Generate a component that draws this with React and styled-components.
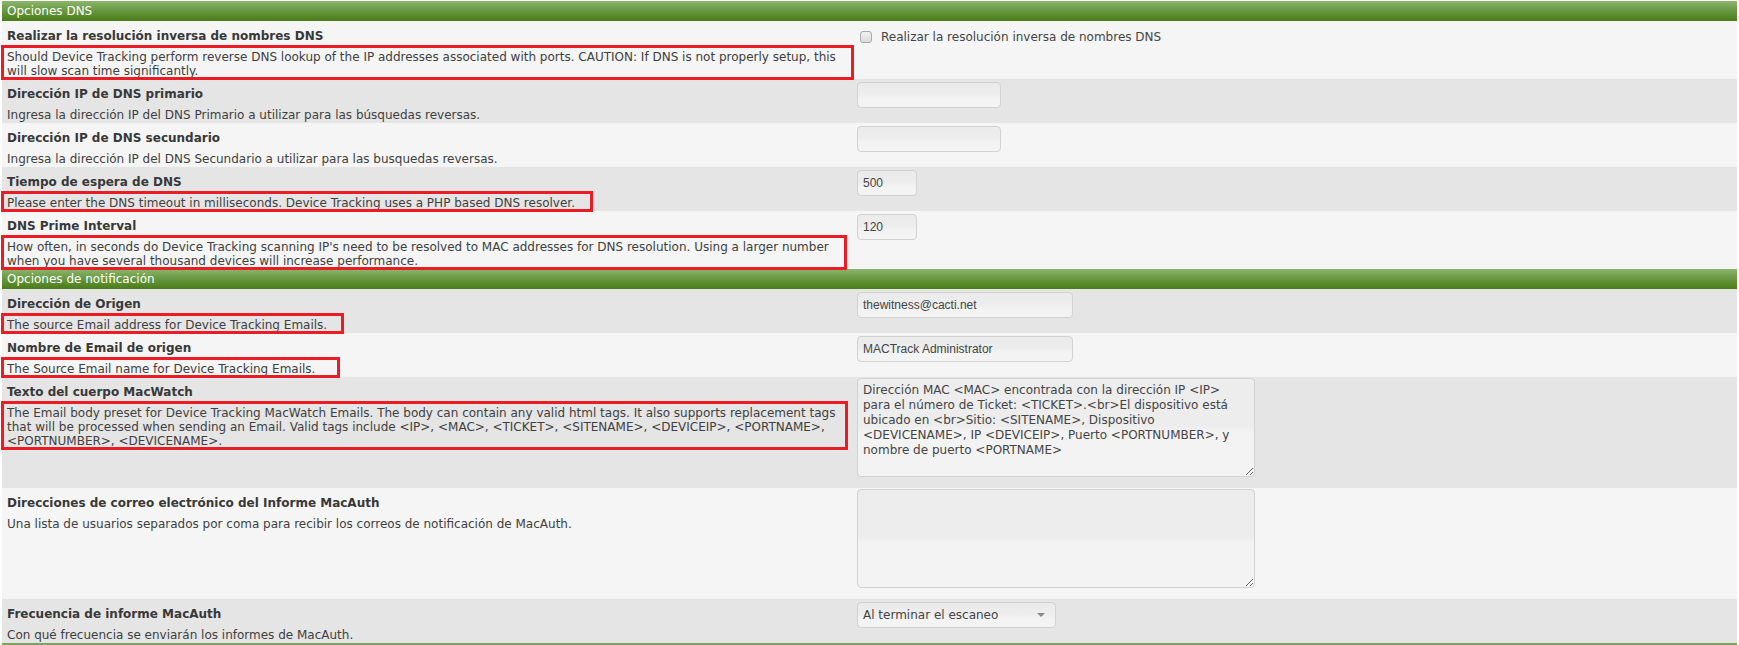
import styled, { createGlobalStyle } from 'styled-components'

const GlobalStyle = createGlobalStyle`
  body {
    margin: 0;
    background: #ffffff;
    font-family: 'DejaVu Sans', Verdana, sans-serif;
    font-size: 12px;
    color: #444;
  }
`

const Page = styled.div`
  padding: 1px 2px 0 2px;
`

const SectionHeader = styled.div`
  height: 20px;
  line-height: 20px;
  padding-left: 5px;
  color: #ffffff;
  font-size: 12px;
  background: linear-gradient(to bottom, #8bb66c 0%, #6a9a43 45%, #4a7c17 100%);
`

const Row = styled.div`
  display: grid;
  grid-template-columns: 854px 1fr;
  background: ${(p) => (p.$alt ? '#e5e5e5' : '#f5f5f5')};
`

const LabelCell = styled.div`
  padding: 6px 2px 1px 5px;
`

const FieldName = styled.div`
  font-size: 12px;
  font-weight: bold;
  color: #383838;
  line-height: 18px;
`

const Description = styled.div`
  position: relative;
  margin-top: 5px;
  font-size: 12px;
  line-height: 14px;
  color: #404040;

  ${(p) =>
    p.$mark &&
    `
    &::after {
      content: '';
      position: absolute;
      left: -6px;
      top: -5px;
      bottom: -2px;
      width: ${p.$mark}px;
      border: 3px solid #ec1c24;
      box-sizing: border-box;
      pointer-events: none;
    }
  `}
`

const FieldCell = styled.div`
  padding: 3px 0 0 1px;
`

const TextInput = styled.input`
  box-sizing: border-box;
  width: ${(p) => p.$w}px;
  height: 26px;
  padding: 0 5px;
  border: 1px solid #d2d2d2;
  border-radius: 4px;
  background: linear-gradient(to bottom, #ebebeb 0%, #ededed 45%, #f3f3f3 65%, #f3f3f3 100%);
  font-family: 'Liberation Sans', Arial, sans-serif;
  font-size: 12px;
  color: #444;
  outline: none;
`

const TextArea = styled.textarea`
  display: block;
  box-sizing: border-box;
  width: 398px;
  height: 99px;
  margin-top: -2px;
  margin-bottom: 11px;
  padding: 4px 5px;
  border: 1px solid #d2d2d2;
  border-radius: 4px;
  background: linear-gradient(to bottom, #ededed 0%, #ededed 48%, #f3f3f3 55%, #f3f3f3 100%);
  font-family: 'DejaVu Sans', Verdana, sans-serif;
  font-size: 12px;
  line-height: 15px;
  color: #444;
  outline: none;
`

const CheckLine = styled.label`
  display: flex;
  align-items: center;
  gap: 9px;
  padding: 6px 0 0 3px;
  color: #444;
`

const CheckBox = styled.span`
  width: 12px;
  height: 12px;
  box-sizing: border-box;
  border: 1px solid #a9a9a9;
  border-radius: 3px;
  background: linear-gradient(to bottom, #f0f0f0, #dcdcdc);
`

const SelectBox = styled.div`
  box-sizing: border-box;
  width: 199px;
  height: 26px;
  padding: 0 10px 0 5px;
  display: flex;
  align-items: center;
  justify-content: space-between;
  border: 1px solid #d2d2d2;
  border-radius: 4px;
  background: linear-gradient(to bottom, #ebebeb 0%, #ededed 45%, #f3f3f3 65%, #f3f3f3 100%);
  color: #444;
`

const Caret = styled.span`
  width: 0;
  height: 0;
  border-left: 4px solid transparent;
  border-right: 4px solid transparent;
  border-top: 4px solid #888;
`

const BottomLine = styled.div`
  height: 3px;
  background: #7aa45a;
`

const macwatchBody =
  'Dirección MAC <MAC> encontrada con la dirección IP <IP> para el número de Ticket: <TICKET>.<br>El dispositivo está ubicado en <br>Sitio: <SITENAME>, Dispositivo <DEVICENAME>, IP <DEVICEIP>, Puerto <PORTNUMBER>, y nombre de puerto <PORTNAME>'

const Field = ({ name, desc, mark, alt, children }) => (
  <Row $alt={alt}>
    <LabelCell>
      <FieldName>{name}</FieldName>
      <Description $mark={mark}>{desc}</Description>
    </LabelCell>
    <FieldCell>{children}</FieldCell>
  </Row>
)

const App = () => {
  return (
    <Page>
      <GlobalStyle />
      <SectionHeader>Opciones DNS</SectionHeader>
      <Field
        name="Realizar la resolución inversa de nombres DNS"
        desc="Should Device Tracking perform reverse DNS lookup of the IP addresses associated with ports. CAUTION: If DNS is not properly setup, this will slow scan time significantly."
        mark={853}
      >
        <CheckLine>
          <CheckBox />
          Realizar la resolución inversa de nombres DNS
        </CheckLine>
      </Field>
      <Field
        alt
        name="Dirección IP de DNS primario"
        desc="Ingresa la dirección IP del DNS Primario a utilizar para las búsquedas reversas."
      >
        <TextInput $w={144} readOnly />
      </Field>
      <Field
        name="Dirección IP de DNS secundario"
        desc="Ingresa la dirección IP del DNS Secundario a utilizar para las busquedas reversas."
      >
        <TextInput $w={144} readOnly />
      </Field>
      <Field
        alt
        name="Tiempo de espera de DNS"
        desc="Please enter the DNS timeout in milliseconds. Device Tracking uses a PHP based DNS resolver."
        mark={592}
      >
        <TextInput $w={60} defaultValue="500" readOnly />
      </Field>
      <Field
        name="DNS Prime Interval"
        desc="How often, in seconds do Device Tracking scanning IP's need to be resolved to MAC addresses for DNS resolution. Using a larger number when you have several thousand devices will increase performance."
        mark={846}
      >
        <TextInput $w={60} defaultValue="120" readOnly />
      </Field>

      <SectionHeader>Opciones de notificación</SectionHeader>
      <Field
        alt
        name="Dirección de Origen"
        desc="The source Email address for Device Tracking Emails."
        mark={343}
      >
        <TextInput $w={216} defaultValue="thewitness@cacti.net" readOnly />
      </Field>
      <Field
        name="Nombre de Email de origen"
        desc="The Source Email name for Device Tracking Emails."
        mark={339}
      >
        <TextInput $w={216} defaultValue="MACTrack Administrator" readOnly />
      </Field>
      <Field
        alt
        name="Texto del cuerpo MacWatch"
        desc="The Email body preset for Device Tracking MacWatch Emails. The body can contain any valid html tags. It also supports replacement tags that will be processed when sending an Email. Valid tags include <IP>, <MAC>, <TICKET>, <SITENAME>, <DEVICEIP>, <PORTNAME>, <PORTNUMBER>, <DEVICENAME>."
        mark={847}
      >
        <TextArea defaultValue={macwatchBody} readOnly />
      </Field>
      <Field
        name="Direcciones de correo electrónico del Informe MacAuth"
        desc="Una lista de usuarios separados por coma para recibir los correos de notificación de MacAuth."
      >
        <TextArea readOnly />
      </Field>
      <Field
        alt
        name="Frecuencia de informe MacAuth"
        desc="Con qué frecuencia se enviarán los informes de MacAuth."
      >
        <SelectBox>
          Al terminar el escaneo
          <Caret />
        </SelectBox>
      </Field>
      <BottomLine />
    </Page>
  )
}

export default App
